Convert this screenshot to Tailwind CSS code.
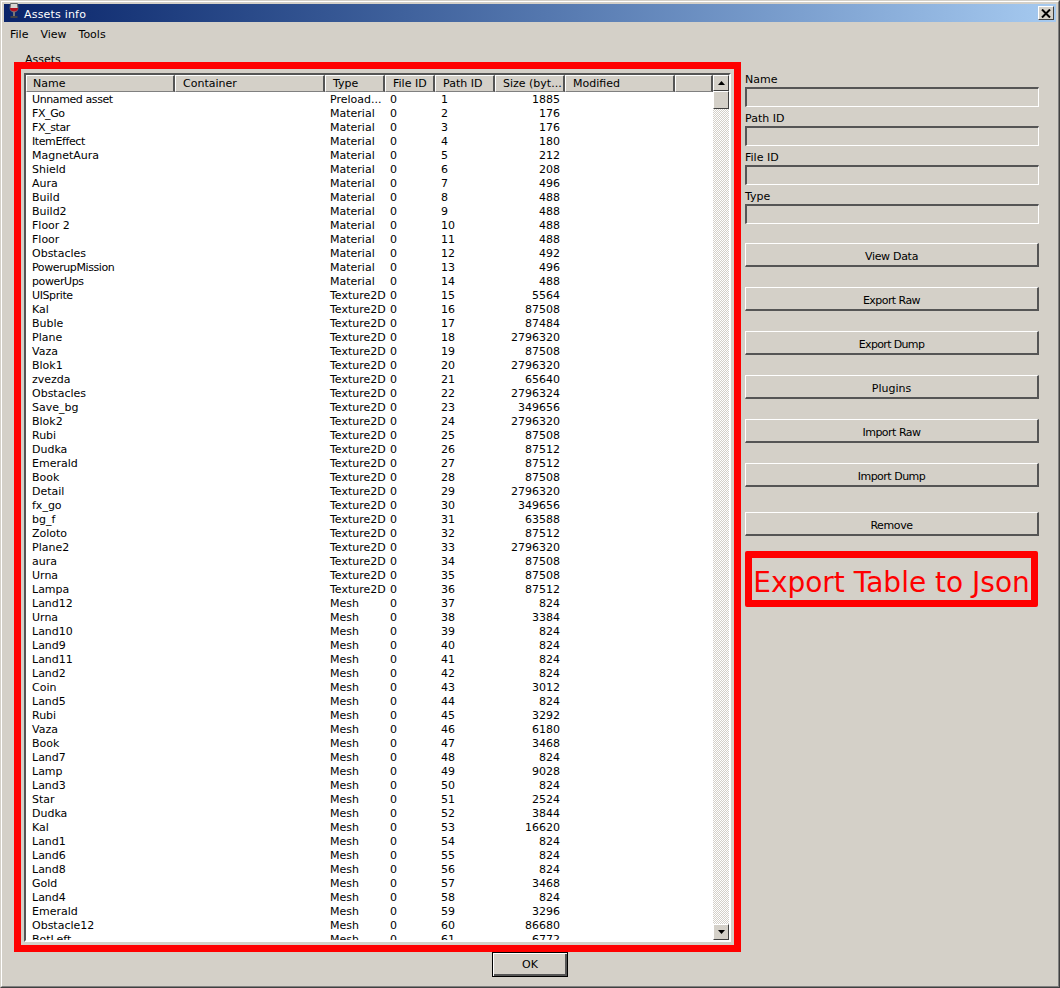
<!DOCTYPE html>
<html lang="en">

<head>
  <meta charset="UTF-8" />
  <title>Assets info</title>
  <script src="https://cdn.jsdelivr.net/npm/@tailwindcss/browser@4"></script>
</head>

<body class="bg-[#d4d0c8]">
  <div class="w-[1060px] h-[988px] box-border border border-t-[#d4d0c8] border-l-[#d4d0c8] border-r-[#404040] border-b-[#404040] overflow-hidden font-['DejaVu_Sans',sans-serif] text-[11px] leading-[14px] text-black">
    <div class="h-full box-border border border-t-white border-l-white border-r-[#808080] border-b-[#808080] bg-[#d4d0c8] p-[2px]">

      <!-- Title bar -->
      <div class="relative h-[18px] flex items-center pl-[20px] pr-[2px] justify-between bg-gradient-to-r from-[#0a246a] to-[#a6caf0] text-white">
        <svg class="absolute left-[5px] -top-[1px]" width="10" height="16" viewBox="0 0 10 16">
          <path d="M1.500 .5h7l.5 4.500c0 2.500-2 4-4 4s-4-1.500-4-4z" fill="#d8d4d0" stroke="#666" stroke-width="1" />
          <path d="M1 5h8v.5c0 2-2 3-4 3s-4-1-4-3z" fill="#b01020" />
          <path d="M4 9h2v4H4z" fill="#777" />
          <path d="M1.500 13h7v2h-7z" fill="#444" />
        </svg>
        <span class="pt-[4px] tracking-[0.2px]">Assets info</span>
        <div class="w-[16px] h-[14px] box-border border border-t-white border-l-white border-r-[#404040] border-b-[#404040] bg-[#d4d0c8] flex items-center justify-center">
          <svg width="10" height="9" viewBox="0 0 10 9">
            <path d="M1 .5l8 8M9 .5l-8 8" stroke="#000" stroke-width="2" fill="none" />
          </svg>
        </div>
      </div>

      <!-- Menu -->
      <div class="h-[20px] mt-[2px] pt-[2px] flex items-center">
        <span class="ml-[6px]">File</span>
        <span class="ml-[12px]">View</span>
        <span class="ml-[12px]">Tools</span>
      </div>

      <!-- Group label -->
      <div class="h-[18px] pl-[21px] pt-[9px]">Assets</div>

      <div class="flex">
        <!-- Red highlight around the list -->
        <div class="relative ml-[10px] w-[727px] h-[890px] box-border border-[7px] border-[#ff0000] pt-[4px] px-[3px] pb-[3px]">
          <div class="h-full box-border border-2 border-t-[#555] border-l-[#555] border-r-white border-b-white flex bg-white">
            <div class="flex-1 min-w-0 flex flex-col">
              <div class="h-[16px] shrink-0 bg-[#d4d0c8] grid grid-cols-[149px_150px_60px_50px_60px_70px_110px_38px]">
                <div class="box-border border border-t-white border-l-white border-r-2 border-r-[#555] border-b-[#808080] pl-[6px] leading-[15px]">Name</div>
                <div class="box-border border border-t-white border-l-white border-r-2 border-r-[#555] border-b-[#808080] pl-[7px] leading-[15px]">Container</div>
                <div class="box-border border border-t-white border-l-white border-r-2 border-r-[#555] border-b-[#808080] pl-[7px] leading-[15px]">Type</div>
                <div class="box-border border border-t-white border-l-white border-r-2 border-r-[#555] border-b-[#808080] pl-[7px] leading-[15px]">File ID</div>
                <div class="box-border border border-t-white border-l-white border-r-2 border-r-[#555] border-b-[#808080] pl-[7px] leading-[15px]">Path ID</div>
                <div class="box-border border border-t-white border-l-white border-r-2 border-r-[#555] border-b-[#808080] pl-[7px] leading-[15px] whitespace-nowrap">Size (byt...</div>
                <div class="box-border border border-t-white border-l-white border-r-2 border-r-[#555] border-b-[#808080] pl-[7px] leading-[15px]">Modified</div>
                <div class="box-border border border-t-white border-l-white border-r-2 border-r-[#555] border-b-[#808080]"></div>
              </div>
              <div id="rows" class="flex-1 overflow-hidden pt-[2px]"></div>
            </div>

            <!-- Scrollbar -->
            <div class="w-[16px] shrink-0 flex flex-col bg-[repeating-conic-gradient(#d4d0c8_0_25%,#ffffff_0_50%)] bg-[length:2px_2px]">
              <div class="h-[16px] box-border border border-t-white border-l-white border-r-[#404040] border-b-[#404040] bg-[#d4d0c8] flex items-center justify-center">
                <svg width="7" height="4" viewBox="0 0 7 4"><path d="M3.500 0L7 4H0z" fill="#000" /></svg>
              </div>
              <div class="h-[18px] box-border border border-t-white border-l-white border-r-[#404040] border-b-[#404040] bg-[#d4d0c8]"></div>
              <div class="flex-1"></div>
              <div class="h-[16px] box-border border border-t-white border-l-white border-r-[#404040] border-b-[#404040] bg-[#d4d0c8] flex items-center justify-center">
                <svg width="7" height="4" viewBox="0 0 7 4"><path d="M0 0h7L3.500 4z" fill="#000" /></svg>
              </div>
            </div>
          </div>
        </div>

        <!-- Right column -->
        <div class="ml-[4px] w-[294px] pt-[10px] flex flex-col">
          <div class="h-[15px] pt-px">Name</div>
          <div class="h-[20px] box-border border-2 border-t-[#555] border-l-[#555] border-r-white border-b-white border-r border-b"></div>
          <div class="h-[15px] mt-[4px] pt-px">Path ID</div>
          <div class="h-[20px] box-border border-2 border-t-[#555] border-l-[#555] border-r-white border-b-white border-r border-b"></div>
          <div class="h-[15px] mt-[4px] pt-px">File ID</div>
          <div class="h-[20px] box-border border-2 border-t-[#555] border-l-[#555] border-r-white border-b-white border-r border-b"></div>
          <div class="h-[15px] mt-[4px] pt-px">Type</div>
          <div class="h-[20px] box-border border-2 border-t-[#555] border-l-[#555] border-r-white border-b-white border-r border-b"></div>

          <div class="mt-[19px] h-[24px] box-border border border-t-white border-l-white border-r-2 border-b-2 border-r-[#555] border-b-[#555] pt-[4px] flex items-center justify-center tracking-[-0.3px]">View Data</div>
          <div class="mt-[20px] h-[24px] box-border border border-t-white border-l-white border-r-2 border-b-2 border-r-[#555] border-b-[#555] pt-[4px] flex items-center justify-center tracking-[-0.55px]">Export Raw</div>
          <div class="mt-[20px] h-[24px] box-border border border-t-white border-l-white border-r-2 border-b-2 border-r-[#555] border-b-[#555] pt-[4px] flex items-center justify-center tracking-[-0.65px]">Export Dump</div>
          <div class="mt-[20px] h-[24px] box-border border border-t-white border-l-white border-r-2 border-b-2 border-r-[#555] border-b-[#555] pt-[4px] flex items-center justify-center">Plugins</div>
          <div class="mt-[20px] h-[24px] box-border border border-t-white border-l-white border-r-2 border-b-2 border-r-[#555] border-b-[#555] pt-[4px] flex items-center justify-center tracking-[-0.5px]">Import Raw</div>
          <div class="mt-[20px] h-[24px] box-border border border-t-white border-l-white border-r-2 border-b-2 border-r-[#555] border-b-[#555] pt-[4px] flex items-center justify-center tracking-[-0.5px]">Import Dump</div>
          <div class="mt-[25px] h-[24px] box-border border border-t-white border-l-white border-r-2 border-b-2 border-r-[#555] border-b-[#555] pt-[4px] flex items-center justify-center tracking-[-0.4px]">Remove</div>

          <div class="mt-[15px] w-[293px] h-[56px] box-border border-[7px] border-[#ff0000] rounded-[2px] pt-[8px] flex items-center justify-center text-[#ff0000] text-[28px] whitespace-nowrap">Export Table to Json</div>
        </div>
      </div>

      <!-- Footer -->
      <div class="flex justify-center">
        <div class="w-[76px] h-[25px] box-border border border-black bg-[#d4d0c8] flex items-center justify-center shadow-[inset_1px_1px_0_#fff,inset_-2px_-2px_0_#555]">OK</div>
      </div>
    </div>
  </div>

  <script>
    const rows = document.getElementById("rows");
    const material = [["FX_Go", 176], ["FX_star", 176], ["ItemEffect", 180], ["MagnetAura", 212], ["Shield", 208], ["Aura", 496], ["Build", 488], ["Build2", 488], ["Floor 2", 488], ["Floor", 488], ["Obstacles", 492], ["PowerupMission", 496], ["powerUps", 488]];
    const textures = [["UISprite", 5564], ["Kal", 87508], ["Buble", 87484], ["Plane", 2796320], ["Vaza", 87508], ["Blok1", 2796320], ["zvezda", 65640], ["Obstacles", 2796324], ["Save_bg", 349656], ["Blok2", 2796320], ["Rubi", 87508], ["Dudka", 87512], ["Emerald", 87512], ["Book", 87508], ["Detail", 2796320], ["fx_go", 349656], ["bg_f", 63588], ["Zoloto", 87512], ["Plane2", 2796320], ["aura", 87508], ["Urna", 87508], ["Lampa", 87512]];
    const meshes = [["Land12", 824], ["Urna", 3384], ["Land10", 824], ["Land9", 824], ["Land11", 824], ["Land2", 824], ["Coin", 3012], ["Land5", 824], ["Rubi", 3292], ["Vaza", 6180], ["Book", 3468], ["Land7", 824], ["Lamp", 9028], ["Land3", 824], ["Star", 2524], ["Dudka", 3844], ["Kal", 16620], ["Land1", 824], ["Land6", 824], ["Land8", 824], ["Gold", 3468], ["Land4", 824], ["Emerald", 3296], ["Obstacle12", 86680], ["BotLeft", 6772]];

    const assets = [
      ["Unnamed asset", 1885, "Preload..."],
      ...material.map(a => [a[0], a[1], "Material"]),
      ...textures.map(a => [a[0], a[1], "Texture2D"]),
      ...meshes.map(a => [a[0], a[1], "Mesh"]),
    ];

    // These names come out wider here than in the screenshot
    const narrow = ["Unnamed asset", "FX_Go", "FX_star", "ItemEffect", "PowerupMission", "powerUps", "UISprite"];

    rows.innerHTML = assets.map((a, i) => `
      <div class="h-[14px] grid grid-cols-[149px_150px_60px_50px_60px_65px] whitespace-nowrap">
        <div class="pl-[6px] ${narrow.includes(a[0]) ? "tracking-[-0.4px]" : ""}">${a[0]}</div>
        <div></div>
        <div class="pl-[5px]">${a[2]}</div>
        <div class="pl-[5px]">0</div>
        <div class="pl-[6px]">${i + 1}</div>
        <div class="text-right">${a[1]}</div>
      </div>
    `).join("");
  </script>
</body>

</html>
